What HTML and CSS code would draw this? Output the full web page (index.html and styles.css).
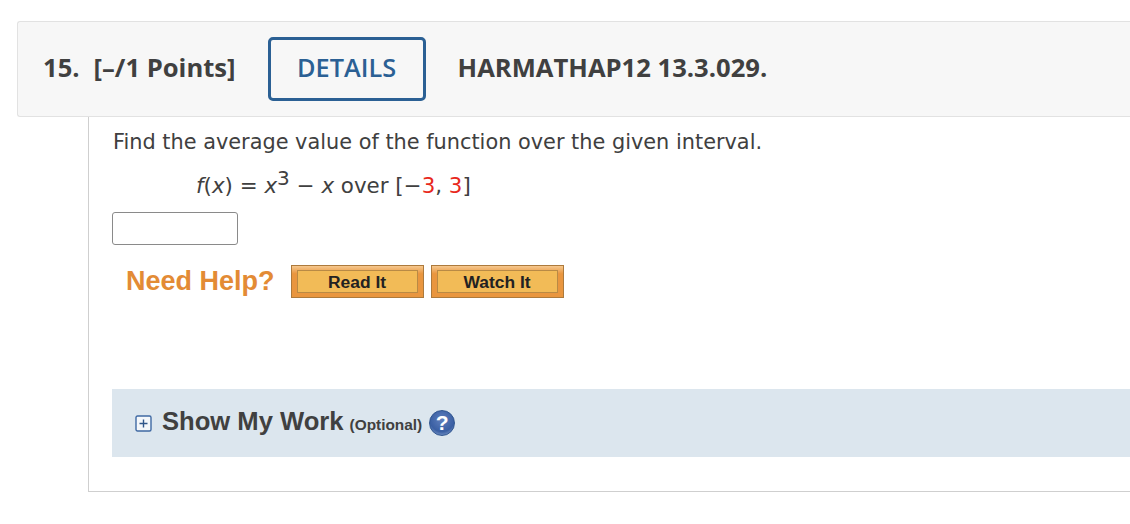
FILE: index.html
```html
<!DOCTYPE html>
<html lang="en">
<head>
  <meta charset="UTF-8">
  <title>Question 15</title>
  <link rel="stylesheet" href="styles.css">
</head>
<body>
  <div class="question">
    <div class="question-head">
      <span class="number">15.</span>
      <span class="points">[&ndash;/1 Points]</span>
      <button class="details">DETAILS</button>
      <span class="code">HARMATHAP12 13.3.029.</span>
    </div>
    <div class="question-body">
      <p class="prompt">Find the average value of the function over the given interval.</p>
      <p class="formula"><i>f</i>(<i>x</i>) = <i>x</i><sup>3</sup> &minus; <i>x</i> over [&minus;<span class="red">3</span>, <span class="red">3</span>]</p>
      <input class="answer" type="text">
      <div class="help">
        <span class="help-label">Need Help?</span>
        <button class="help-btn"><span>Read It</span></button>
        <button class="help-btn"><span>Watch It</span></button>
      </div>
      <div class="work">
        <svg class="plus" width="17" height="17" viewBox="0 0 17 17">
          <rect x="1" y="1" width="15" height="15" rx="1.5" fill="#f4f7fa" stroke="#3f69a3" stroke-width="1.4"/>
          <path d="M4.5 8.5h8M8.5 4.5v8" stroke="#2e5589" stroke-width="1.4" fill="none"/>
        </svg>
        <span class="work-title">Show My Work</span>
        <span class="work-note">(Optional)</span>
        <span class="work-q">?</span>
      </div>
    </div>
  </div>
</body>
</html>
```

FILE: styles.css
```css
:root {
  --texto: #404040;
  --azul: #2b6094;
  --laranja: #e38b35;
}

* {
  box-sizing: border-box;
}

body {
  margin: 0;
  height: 524px;
  overflow: hidden;
  background: #fff;
  color: var(--texto);
}

.question {
  padding: 21px 0 0 17px;
}

.question-head {
  display: flex;
  align-items: center;
  height: 96px;
  padding-left: 25px;
  background: #f7f7f7;
  border: 1px solid #e2e2e2;
  border-right: none;
  border-radius: 3px 0 0 3px;
  font-family: "Open Sans", sans-serif;
  font-size: 25.6px;
  font-weight: 700;
}

.number {
  margin-right: 14px;
  padding-bottom: 3px;
}

.points,
.code {
  padding-bottom: 3px;
}

.details {
  width: 158px;
  height: 64px;
  margin: 0 32px;
  padding-bottom: 6px;
  background: #f7f7f7;
  border: 3px solid var(--azul);
  border-radius: 5px;
  color: var(--azul);
  font-family: "Open Sans", sans-serif;
  font-size: 25.3px;
  font-weight: 600;
}

.question-body {
  height: 375px;
  margin-left: 71px;
  padding: 11px 0 0 23px;
  border-left: 1px solid #cfcfcf;
  border-bottom: 1px solid #cfcfcf;
  font-family: "DejaVu Sans", Verdana, sans-serif;
  font-size: 20.85px;
}

.prompt {
  margin: 0 0 0 1px;
  height: 28px;
  line-height: 28px;
}

.formula {
  margin: 16px 0 0 84px;
  height: 28px;
  font-size: 21.4px;
  line-height: 28px;
}

.formula sup {
  font-size: 20px;
  line-height: 0;
}

.red {
  color: #e8281c;
}

.answer {
  display: block;
  width: 126px;
  height: 33px;
  margin-top: 12px;
  background: #fff;
  border: 1px solid #8a8a8a;
  border-radius: 3px;
}

.help {
  display: flex;
  align-items: center;
  gap: 7px;
  margin: 20px 0 0 14px;
}

.help-label {
  margin-right: 9px;
  color: var(--laranja);
  font-family: "Liberation Sans", Arial, sans-serif;
  font-size: 27px;
  font-weight: 700;
}

.help-btn {
  width: 133px;
  height: 33px;
  padding: 4px 5px;
  background: linear-gradient(#f6c88e, #e9963f 25%, #e9963f);
  border: 1px solid #ad7a3c;
}

.help-btn span {
  display: block;
  height: 100%;
  line-height: 23px;
  background: #f2bb57;
  border: 1px solid #b98a45;
  color: #222;
  font-family: "Liberation Sans", Arial, sans-serif;
  font-size: 17.4px;
  font-weight: 700;
}

.work {
  display: flex;
  align-items: center;
  height: 68px;
  margin-top: 91px;
  padding-left: 23px;
  background: #dce6ee;
  font-family: "Liberation Sans", Arial, sans-serif;
  font-weight: 700;
}

.plus {
  margin-right: 10px;
}

.work-title {
  padding-bottom: 4px;
  font-size: 25.6px;
}

.work-note {
  margin: 3px 0 0 6px;
  font-size: 15.4px;
}

.work-q {
  width: 26px;
  height: 26px;
  margin-left: 7px;
  border: 1px solid #2f5590;
  border-radius: 50%;
  background: radial-gradient(circle at 50% 35%, #5f7fbd, #3a5fa3 62%, #86a2cf 92%);
  color: #fff;
  font-size: 21px;
  line-height: 24px;
  text-align: center;
}
```
